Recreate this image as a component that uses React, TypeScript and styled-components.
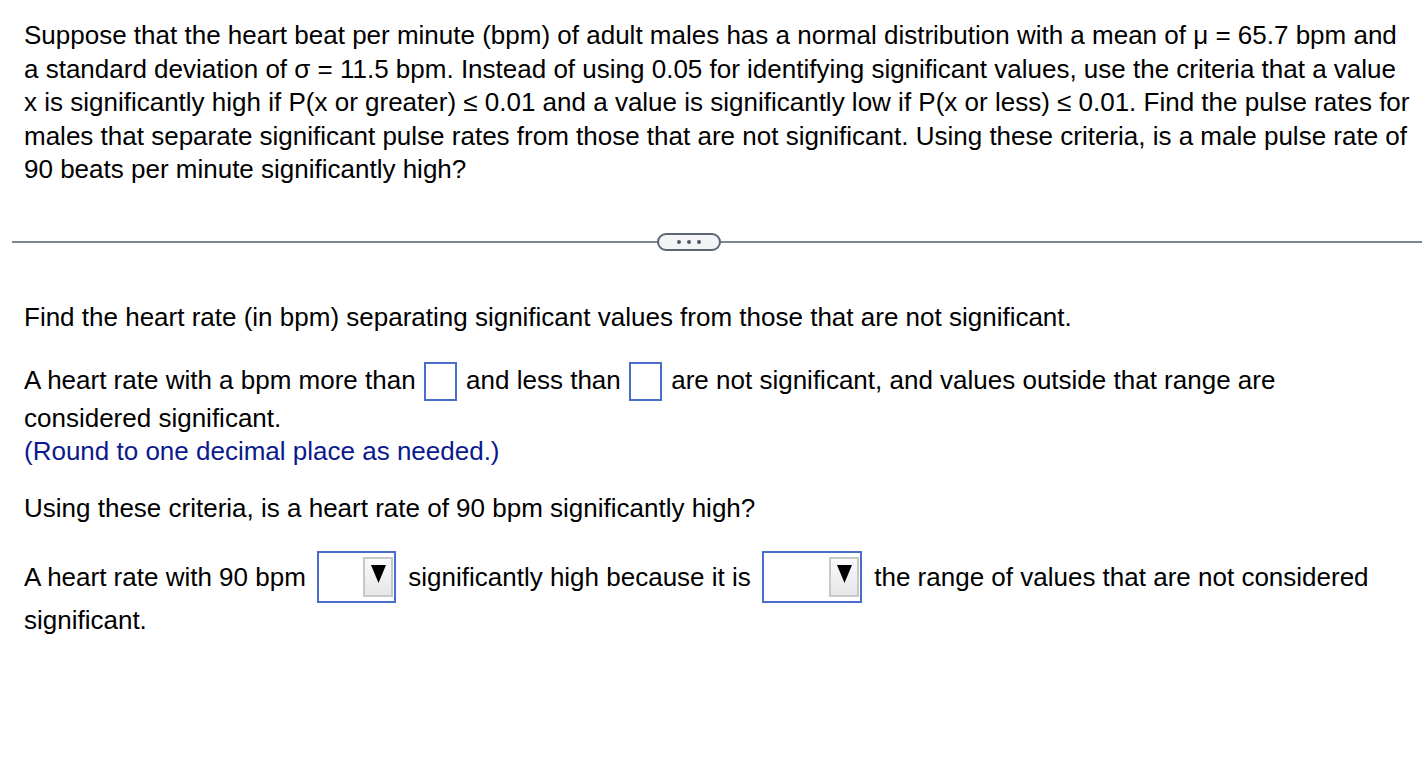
import styled, { createGlobalStyle } from "styled-components";

const Global = createGlobalStyle`
  html, body {
    margin: 0;
    padding: 0;
    background: #fff;
  }
  body {
    font-family: "Liberation Sans", Arial, sans-serif;
    color: #000;
  }
`;

function Select({ width }: { width: number }) {
  return (
    <Dropdown $width={width}>
      <DropButton>
        <svg width="15" height="18" viewBox="0 0 15 18">
          <polygon points="0,0 15,0 7.5,18" fill="#000" />
        </svg>
      </DropButton>
    </Dropdown>
  );
}

function App() {
  return (
    <Page>
      <Global />
      <Question>
        Suppose that the heart beat per minute (bpm) of adult males has a normal
        distribution with a mean of μ = 65.7 bpm and a standard deviation of
        σ = 11.5 bpm. Instead of using 0.05 for identifying significant values,
        use the criteria that a value x is significantly high if P(x or
        greater) ≤ 0.01 and a value is significantly low if P(x or less) ≤ 0.01.
        Find the pulse rates for males that separate significant pulse rates
        from those that are not significant. Using these criteria, is a male
        pulse rate of 90 beats per minute significantly high?
      </Question>

      <Divider>
        <MoreButton>
          <Dot />
          <Dot />
          <Dot />
        </MoreButton>
      </Divider>

      <Body>
        <Prompt>
          Find the heart rate (in bpm) separating significant values from those
          that are not significant.
        </Prompt>
        <Answer $gap={27} $line={38}>
          A heart rate with a bpm more than <Blank /> and less than <Blank />{" "}
          are not significant, and values outside that range are considered
          significant.
        </Answer>
        <Hint>(Round to one decimal place as needed.)</Hint>
        <Prompt $gap={27}>
          Using these criteria, is a heart rate of 90 bpm significantly high?
        </Prompt>
        <Answer $gap={30} $line={42}>
          A heart rate with 90 bpm <Select width={79} /> significantly high
          because it is <Select width={100} /> the range of values that are not
          considered significant.
        </Answer>
      </Body>
    </Page>
  );
}

const Page = styled.div`
  padding: 19px 0 40px;
  font-size: 26px;
  line-height: 33.5px;
`;

const Question = styled.p`
  margin: 0;
  padding: 0 14px 0 24px;
`;

const Divider = styled.div`
  margin: 46px 4px 0 12px;
  height: 18px;
  display: flex;
  align-items: center;
  position: relative;
  &::before {
    content: "";
    position: absolute;
    left: 0;
    right: 0;
    top: 8px;
    height: 2px;
    background: #7d8593;
  }
`;

const MoreButton = styled.div`
  position: relative;
  width: 64px;
  height: 18px;
  box-sizing: border-box;
  border: 2px solid #5b6573;
  border-radius: 9px;
  background: #f3f4f6;
  display: flex;
  align-items: center;
  justify-content: center;
  gap: 6px;
  margin-left: 645px;
`;

const Dot = styled.span`
  width: 4px;
  height: 4px;
  border-radius: 50%;
  background: #505a66;
`;

const Body = styled.div`
  padding: 0 40px 0 24px;
  margin-top: 50px;
`;

const Prompt = styled.p<{ $gap?: number }>`
  margin: ${(p) => p.$gap ?? 0}px 0 0;
`;

const Answer = styled.p<{ $gap: number; $line: number }>`
  margin: ${(p) => p.$gap}px 0 0;
  line-height: ${(p) => p.$line}px;
`;

const Hint = styled.p`
  margin: 0;
  color: #0a1a8c;
  line-height: 28px;
`;

const Blank = styled.span`
  display: inline-block;
  box-sizing: border-box;
  width: 33px;
  height: 39px;
  border: 2px solid #4a6ccb;
  vertical-align: middle;
  margin: -4px 2px -4px 1px;
  position: relative;
  top: -1px;
`;

const Dropdown = styled.span<{ $width: number }>`
  display: inline-flex;
  justify-content: flex-end;
  align-items: center;
  box-sizing: border-box;
  width: ${(p) => p.$width}px;
  height: 52px;
  border: 2px solid #4a6ccb;
  padding-right: 1px;
  vertical-align: middle;
  margin: -6px 5px -6px 4px;
  position: relative;
  top: -2px;
`;

const DropButton = styled.span`
  display: flex;
  justify-content: center;
  align-items: flex-start;
  box-sizing: border-box;
  width: 30px;
  height: 40px;
  padding-top: 6px;
  border: 2px solid #c8c8c8;
  background: linear-gradient(#fbfbfb, #e6e6e6);
`;

export default App;
